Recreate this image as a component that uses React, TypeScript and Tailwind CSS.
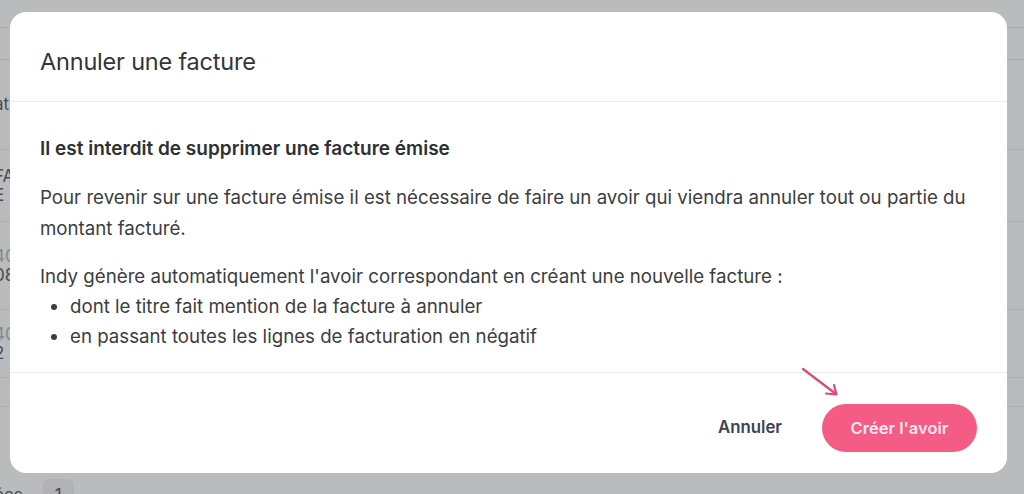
export default function App() {
  const rows = [
    { h: 28, t: [] as { s: string; c: string }[] },
    { h: 32, t: [] },
    { h: 90, t: [{ s: 'at', c: 'text-[#4a4c50]' }] },
    { h: 72, t: [{ s: 'FA', c: 'text-[#4a4c50]' }, { s: 'E', c: 'text-[#4a4c50]' }] },
    { h: 88, t: [{ s: '40', c: 'text-[#86888c]' }, { s: '08', c: 'text-[#4a4c50]' }] },
    { h: 68, t: [{ s: '40', c: 'text-[#86888c]' }, { s: '2', c: 'text-[#4a4c50]' }] },
    { h: 29, t: [] },
  ];

  return (
    <div className="relative w-[1024px] h-[494px] overflow-hidden bg-[#b9bbbd] font-['Inter','Liberation_Sans',sans-serif]">
      {/* page behind the overlay */}
      <div className="flex flex-col">
        {rows.map((r, i) => (
          <div
            key={i}
            className="border-b border-[#aaacaf] flex flex-col justify-center text-[17px] leading-[19px]"
            style={{ height: r.h }}
          >
            {r.t.map((x, j) => (
              <span key={j} className={`-ml-[6px] ${x.c}`}>{x.s}</span>
            ))}
          </div>
        ))}
        <div className="flex items-center gap-[28px] pt-[72px] text-[17px] text-[#4a4c50]">
          <span className="-ml-[6px]">ées</span>
          <span className="rounded-md bg-[#b0b2b5] px-3 py-1 -ml-[8px]">1</span>
        </div>
      </div>

      {/* modal */}
      <div className="absolute left-[10px] top-[12px] w-[997px] h-[461px] rounded-[16px] bg-white flex flex-col">
        <div className="h-[90px] flex items-center pt-[10px] px-[30px] border-b border-[#ececec]">
          <h2 className="text-[23.5px] text-[#333538] tracking-[-0.2px]">Annuler une facture</h2>
        </div>

        <div className="flex-1 px-[30px] pt-[34px] text-[18.7px] text-[#3b3d40] border-b border-[#ececec]">
          <p className="font-semibold text-[19px] text-[#2e3033] leading-[26px]">
            Il est interdit de supprimer une facture émise
          </p>
          <p className="mt-[20px] leading-[31px]">
            Pour revenir sur une facture émise il est nécessaire de faire un avoir qui viendra annuler tout ou partie du montant facturé.
          </p>
          <p className="mt-[18px] leading-[30px]">
            Indy génère automatiquement l'avoir correspondant en créant une nouvelle facture :
          </p>
          <ul className="list-disc pl-[30px] leading-[30px]">
            <li>dont le titre fait mention de la facture à annuler</li>
            <li>en passant toutes les lignes de facturation en négatif</li>
          </ul>
        </div>

        <div className="h-[100px] flex items-center justify-end gap-[40px] pt-[10px] px-[30px]">
          <button className="text-[16.8px] font-semibold text-[#3a4350]">Annuler</button>
          <button className="h-[48px] w-[155px] rounded-full bg-[#f45c86] text-[16.5px] font-semibold text-[#fde7ee]">
            Créer l'avoir
          </button>
        </div>
      </div>

      {/* annotation arrow */}
      <svg className="absolute left-[798px] top-[364px]" width="46" height="36" viewBox="0 0 46 36" fill="none">
        <path d="M5 5 L38 30" stroke="#e2477a" strokeWidth="2.2" strokeLinecap="round" />
        <path d="M28 29.5 L38.5 30.5 L36 21" stroke="#e2477a" strokeWidth="2.2" strokeLinecap="round" strokeLinejoin="round" />
      </svg>
    </div>
  );
}
